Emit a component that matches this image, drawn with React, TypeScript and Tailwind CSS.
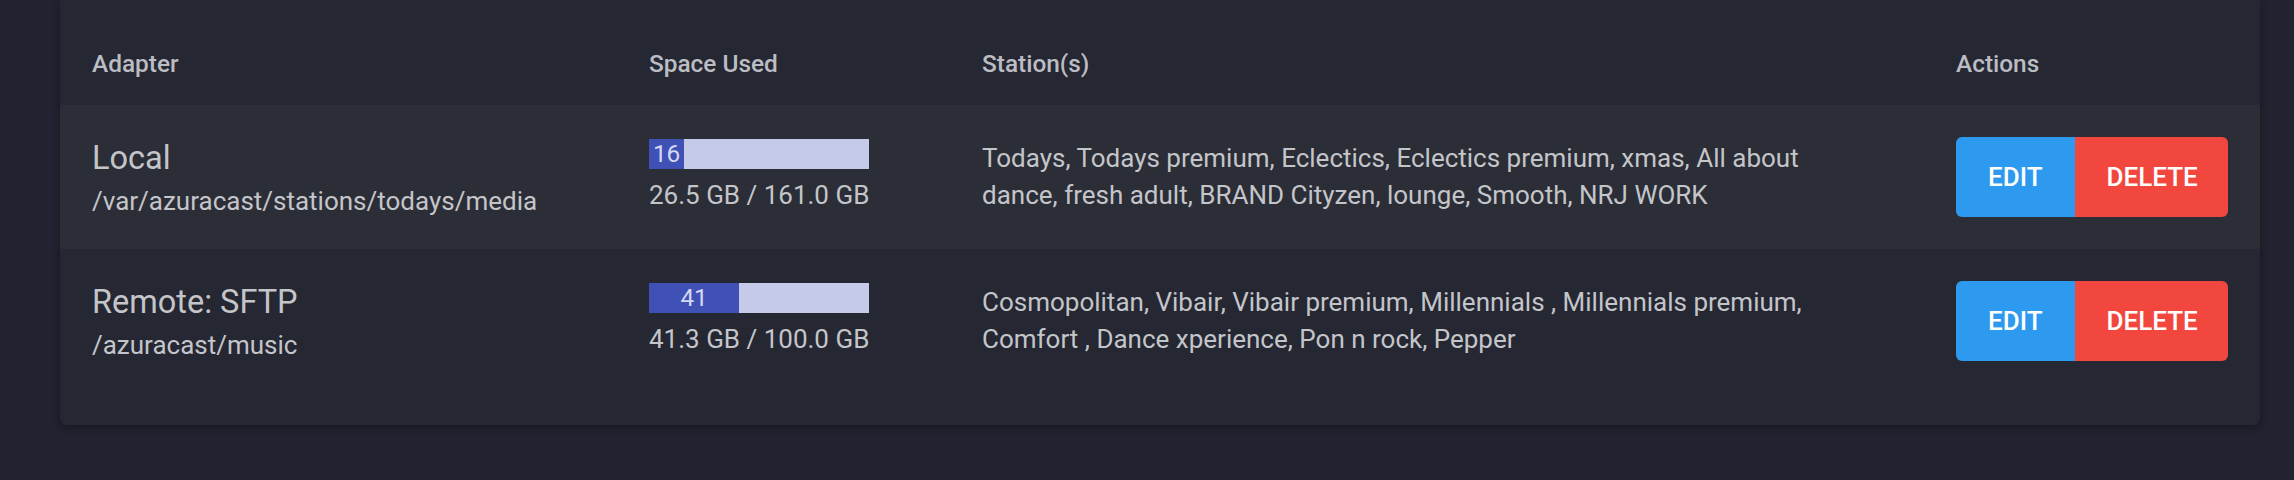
import React from 'react';

interface StorageLocation {
  id: number;
  adapter: string;
  path: string;
  percent: number;
  used: string;
  stations: string;
}

const locations: StorageLocation[] = [
  {
    id: 1,
    adapter: 'Local',
    path: '/var/azuracast/stations/todays/media',
    percent: 16,
    used: '26.5 GB / 161.0 GB',
    stations:
      'Todays, Todays premium, Eclectics, Eclectics premium, xmas, All about dance, fresh adult, BRAND Cityzen, lounge, Smooth, NRJ WORK'
  },
  {
    id: 2,
    adapter: 'Remote: SFTP',
    path: '/azuracast/music',
    percent: 41,
    used: '41.3 GB / 100.0 GB',
    stations:
      'Cosmopolitan, Vibair, Vibair premium, Millennials , Millennials premium, Comfort , Dance xperience, Pon n rock, Pepper'
  }
];

const cols = 'grid grid-cols-[557px_333px_974px_336px]';

const App: React.FC = () => {
  return (
    <div
      className="min-h-[480px] w-full bg-[#222330] pl-[60px] pr-[34px]"
      style={{ fontFamily: 'Roboto, "Noto Sans", sans-serif' }}
    >
      <div className="w-[2200px] bg-[#252733] rounded-b-[7px] pb-[32px] shadow-[0_3px_8px_rgba(0,0,0,0.35)]">
        <div className={`${cols} h-[105px] items-end pb-[22px] text-[24.4px] leading-[36.6px] font-medium text-[#bcbdc3]`}>
          <div className="px-[32px]">Adapter</div>
          <div className="px-[32px]">Space Used</div>
          <div className="px-[32px]">Station(s)</div>
          <div className="px-[32px]">Actions</div>
        </div>

        {locations.map((loc, idx) => (
          <div
            key={loc.id}
            className={`${cols} h-[144px] items-center ${idx % 2 === 0 ? 'bg-[#2b2d37]' : ''}`}
          >
            <div className="px-[32px] pt-[5px] text-[#c4c5c9]">
              <div className="text-[32.5px] leading-[40px]">{loc.adapter}</div>
              <div className="mt-[4px] text-[26px] leading-[39px]">{loc.path}</div>
            </div>

            <div className="px-[32px]">
              <div className="flex w-[220px] h-[30px] bg-[#c5cae9]">
                <div
                  className="h-full bg-[#3f51b5] text-[#d4d8f2] text-center text-[24.4px] leading-[30px] overflow-hidden"
                  style={{ width: `${loc.percent}%` }}
                >
                  {loc.percent}
                </div>
              </div>
              <div className="mt-[7px] text-[26px] leading-[39px] text-[#c4c5c9]">{loc.used}</div>
            </div>

            <div className="px-[32px]">
              <p className="max-w-[860px] text-[26px] leading-[36.6px] text-[#c4c5c9]">{loc.stations}</p>
            </div>

            <div className="px-[32px]">
              <div className="flex h-[80px] rounded-[6px] overflow-hidden text-[26px] font-medium text-white">
                <button className="px-[32px] bg-[#2d99ef] uppercase">Edit</button>
                <button className="px-[32px] bg-[#f2473f] uppercase">Delete</button>
              </div>
            </div>
          </div>
        ))}
      </div>
    </div>
  );
};

export default App;
